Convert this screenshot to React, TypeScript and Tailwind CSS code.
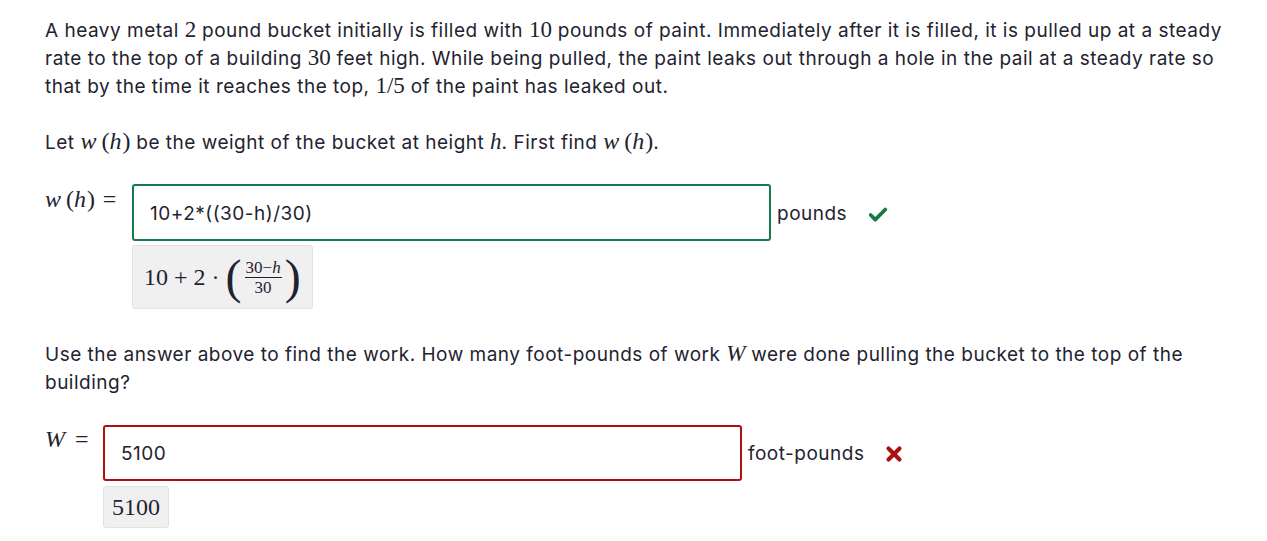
import { Check, X } from "lucide-react"

const mathFont = { fontFamily: '"Liberation Serif", "DejaVu Serif", serif' }

function M({ children, italic = false }: { children: React.ReactNode; italic?: boolean }) {
  return (
    <span className={`text-[23px] leading-none tracking-normal ${italic ? "italic" : ""}`} style={mathFont}>
      {children}
    </span>
  )
}

function WofH() {
  return (
    <span className="text-[24px] leading-none tracking-normal" style={mathFont}>
      <i>w</i>
      <span className="ml-[5px]">(</span>
      <i className="pr-[1px]">h</i>
      <span>)</span>
    </span>
  )
}

export default function App() {
  return (
    <div
      className="min-h-screen bg-white px-[45px] pt-[17px] text-[19px] leading-[28px] tracking-[0.5px] text-[#1f2330]"
      style={{ fontFamily: 'Inter, "Inter Variable", "Open Sans", sans-serif' }}
    >
      {/* Problem statement */}
      <p>
        A heavy metal <M>2</M> pound bucket initially is filled with <M>10</M> pounds of paint. Immediately after it
        is filled, it is pulled up at a steady rate to the top of a building <M>30</M> feet high. While being pulled,
        the paint leaks out through a hole in the pail at a steady rate so that by the time it reaches the top,{" "}
        <M>1/5</M> of the paint has leaked out.
      </p>

      <p className="mt-[28px]">
        Let <WofH /> be the weight of the bucket at height <M italic>h</M>. First find <WofH />.
      </p>

      {/* Part 1 */}
      <div className="mt-[27px] flex">
        <div className="w-[87px] pt-[1px] leading-[28px]">
          <WofH /> <span className="ml-[2px] text-[24px] tracking-normal" style={mathFont}>=</span>
        </div>
        <div>
          <div className="flex items-center">
            <div className="flex h-[57px] w-[639px] items-center rounded-[3px] border-2 border-[#167a4c] px-[16px] pt-[3px]">
              10+2*((30-h)/30)
            </div>
            <span className="ml-[6px] pt-[3px]">pounds</span>
            <Check className="ml-[20px] mt-[4px] text-[#137a48]" size={22} strokeWidth={4} />
          </div>
          <div className="mt-[4px] inline-flex h-[64px] items-center rounded-[3px] border border-[#e2e2e2] bg-[#f0f0f0] px-[11px] tracking-normal">
            <span className="flex items-center text-[24px]" style={mathFont}>
              10 <span className="mx-[6px]">+</span> 2 <span className="mx-[6px]">·</span>
              <span className="flex items-center">
                <span className="text-[48px] leading-none font-light">(</span>
                <span className="mx-[3px] inline-flex flex-col items-center text-[17px] leading-[19px]">
                  <span className="border-b border-[#1f2330] px-[1px]">
                    30−<i>h</i>
                  </span>
                  <span>30</span>
                </span>
                <span className="text-[48px] leading-none font-light">)</span>
              </span>
            </span>
          </div>
        </div>
      </div>

      {/* Part 2 */}
      <p className="mt-[32px]">
        Use the answer above to find the work. How many foot-pounds of work <M italic>W</M> were done pulling the bucket
        to the top of the building?
      </p>

      <div className="mt-[28px] flex">
        <div className="w-[58px] leading-[28px]">
          <span className="text-[24px] tracking-normal" style={mathFont}>
            <i>W</i> <span className="ml-[4px]">=</span>
          </span>
        </div>
        <div>
          <div className="flex items-center">
            <div className="flex h-[56px] w-[639px] items-center rounded-[3px] border-2 border-[#ad1010] px-[16px] pt-[1px]">
              5100
            </div>
            <span className="ml-[6px] pt-[2px]">foot-pounds</span>
            <X className="ml-[18px] mt-[2px] text-[#b00e0e]" size={22} strokeWidth={4.5} />
          </div>
          <div className="mt-[5px] inline-flex h-[42px] items-center rounded-[3px] border border-[#e2e2e2] bg-[#f0f0f0] px-[8px]">
            <span className="text-[24px] tracking-normal" style={mathFont}>
              5100
            </span>
          </div>
        </div>
      </div>
    </div>
  )
}
